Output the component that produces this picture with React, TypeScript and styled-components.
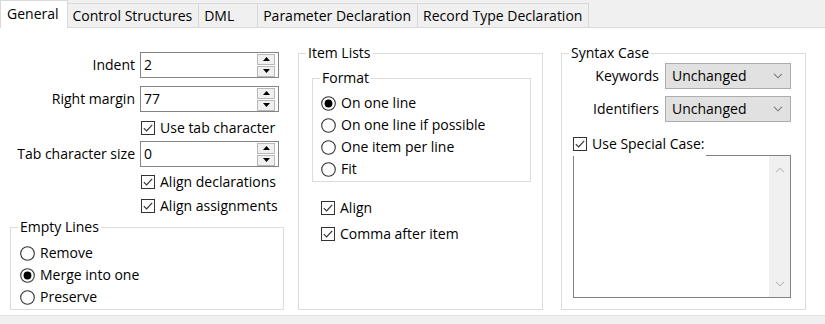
import React from "react";
import styled, { createGlobalStyle } from "styled-components";

const GlobalStyle = createGlobalStyle`
  html, body { margin: 0; padding: 0; background: #ffffff; }
  body {
    font-family: "Open Sans", "Noto Sans", "DejaVu Sans", sans-serif;
    font-size: 14px;
    color: #000000;
  }
  * { box-sizing: border-box; }
`;

const Window = styled.div`
  width: 825px;
  height: 324px;
  display: flex;
  flex-direction: column;
  background: #ffffff;
  overflow: hidden;
`;

const TabBar = styled.div`
  height: 28px;
  flex: none;
  display: flex;
  align-items: flex-end;
  background: #f0f0f0;
  border-bottom: 1px solid #d9d9d9;
`;

const Tab = styled.div<{ $active?: boolean }>`
  position: relative;
  z-index: ${(p) => (p.$active ? 1 : 0)};
  height: ${(p) => (p.$active ? "28px" : "24px")};
  margin-bottom: ${(p) => (p.$active ? "-1px" : "0")};
  margin-left: ${(p) => (p.$active ? "0" : "-1px")};
  min-width: 60px;
  padding: ${(p) => (p.$active ? "0 8px 2px 6px" : "0 6px 0 5px")};
  display: flex;
  align-items: center;
  background: ${(p) => (p.$active ? "#ffffff" : "#f0f0f0")};
  border: 1px solid #d9d9d9;
  border-bottom: none;
  white-space: nowrap;
  line-height: 18px;
`;

const Body = styled.div`
  flex: 1;
  display: flex;
  gap: 14px;
  padding: 0 0 5px 10px;
  min-height: 0;
`;

const LeftColumn = styled.div`
  width: 274px;
  display: flex;
  flex-direction: column;
  padding-top: 24px;
`;

const MiddleColumn = styled.div`
  width: 245px;
  display: flex;
  flex-direction: column;
  padding-top: 17px;
`;

const RightColumn = styled.div`
  width: 245px;
  margin-left: 4px;
  display: flex;
  flex-direction: column;
  padding-top: 17px;
`;

const Footer = styled.div`
  height: 9px;
  flex: none;
  background: #f0f0f0;
  border-top: 1px solid #e3e3e3;
`;

const GroupBox = styled.fieldset<{ $mt?: number }>`
  margin: ${(p) => p.$mt ?? 0}px 0 0 0;
  padding: 0;
  min-width: 0;
  border: 1px solid #dcdcdc;
`;

const FillGroupBox = styled(GroupBox)`
  flex: 1;
`;

const GroupTitle = styled.legend`
  margin-left: 7px;
  padding: 0 2px;
  line-height: 16px;
  font-size: 14px;
`;

const GroupContent = styled.div<{ $pad: string }>`
  padding: ${(p) => p.$pad};
  display: flex;
  flex-direction: column;
`;

const FieldRow = styled.div<{ $mt?: number }>`
  display: flex;
  align-items: center;
  gap: 5px;
  margin-top: ${(p) => p.$mt ?? 0}px;
`;

const FieldLabel = styled.div`
  width: 125px;
  text-align: right;
  white-space: nowrap;
  line-height: 18px;
`;

const SpinBox = styled.div`
  width: 139px;
  height: 26px;
  display: flex;
  align-items: center;
  border: 1px solid #848484;
  background: #ffffff;
`;

const SpinValue = styled.div`
  flex: 1;
  padding-left: 3px;
  line-height: 20px;
`;

const SpinButtons = styled.div`
  display: flex;
  flex-direction: column;
  gap: 1px;
  padding-right: 3px;
`;

const SpinButton = styled.div`
  width: 18px;
  height: 11px;
  border: 1px solid #b9b9b9;
  background: #f0f0f0;
  display: flex;
  align-items: center;
  justify-content: center;
`;

const CheckRow = styled.div<{ $indent?: number; $mt?: number }>`
  height: 24px;
  display: flex;
  align-items: center;
  gap: 5px;
  padding-left: ${(p) => p.$indent ?? 0}px;
  margin-top: ${(p) => p.$mt ?? 0}px;
  white-space: nowrap;
  line-height: 18px;
`;

const OverlayCheckRow = styled(CheckRow)`
  position: relative;
  z-index: 1;
  align-self: flex-start;
  background: #ffffff;
  padding-right: 2px;
`;

const RadioRow = styled.div`
  height: 22px;
  display: flex;
  align-items: center;
  gap: 5px;
  white-space: nowrap;
  line-height: 18px;
`;

const ComboRow = styled.div<{ $mt?: number }>`
  display: flex;
  align-items: center;
  gap: 6px;
  margin-top: ${(p) => p.$mt ?? 0}px;
`;

const ComboLabel = styled.div`
  width: 86px;
  text-align: right;
  white-space: nowrap;
  line-height: 18px;
`;

const ComboBox = styled.div`
  width: 126px;
  height: 26px;
  display: flex;
  align-items: center;
  justify-content: space-between;
  padding: 0 7px 0 6px;
  background: #e1e1e1;
  border: 1px solid #adadad;
  line-height: 18px;
`;

const TextArea = styled.div`
  width: 218px;
  height: 143px;
  margin-top: -1px;
  display: flex;
  justify-content: flex-end;
  border: 1px solid #828282;
  background: #ffffff;
`;

const ScrollBar = styled.div`
  width: 21px;
  background: #f0f0f0;
  display: flex;
  flex-direction: column;
  align-items: center;
  justify-content: space-between;
  padding: 11px 0 10px;
`;

const CheckIcon = () => (
  <svg width="14" height="14" viewBox="0 0 14 14" style={{ flex: "none" }}>
    <rect x="0.5" y="0.5" width="13" height="13" fill="#ffffff" stroke="#333333" />
    <path d="M2.8 7.1 L5.6 9.9 L11.2 3.8" fill="none" stroke="#333333" strokeWidth="1.2" />
  </svg>
);

const RadioIcon = ({ checked }: { checked?: boolean }) => (
  <svg width="15" height="15" viewBox="0 0 15 15" style={{ flex: "none" }}>
    <circle cx="7.5" cy="7.5" r="6.8" fill="#ffffff" stroke="#333333" strokeWidth="1.1" />
    {checked && <circle cx="7.5" cy="7.5" r="3.9" fill="#000000" />}
  </svg>
);

const Triangle = ({ up }: { up?: boolean }) => (
  <svg width="7" height="4" viewBox="0 0 7 4">
    <polygon points={up ? "0,4 7,4 3.5,0" : "0,0 7,0 3.5,4"} fill="#000000" />
  </svg>
);

const Chevron = ({ up, color }: { up?: boolean; color: string }) => (
  <svg width="10" height="6" viewBox="0 0 10 6">
    <path
      d={up ? "M1 5.2 L5 1.2 L9 5.2" : "M1 0.8 L5 4.8 L9 0.8"}
      fill="none"
      stroke={color}
      strokeWidth="1.1"
    />
  </svg>
);

const Spin = ({ label, value, mt }: { label: string; value: string; mt: number }) => (
  <FieldRow $mt={mt}>
    <FieldLabel>{label}</FieldLabel>
    <SpinBox>
      <SpinValue>{value}</SpinValue>
      <SpinButtons>
        <SpinButton>
          <Triangle up />
        </SpinButton>
        <SpinButton>
          <Triangle />
        </SpinButton>
      </SpinButtons>
    </SpinBox>
  </FieldRow>
);

const Combo = ({ label, value, mt }: { label: string; value: string; mt: number }) => (
  <ComboRow $mt={mt}>
    <ComboLabel>{label}</ComboLabel>
    <ComboBox>
      <span>{value}</span>
      <Chevron color="#7a7a7a" />
    </ComboBox>
  </ComboRow>
);

export default function App() {
  return (
    <Window>
      <GlobalStyle />
      <TabBar>
        <Tab $active>General</Tab>
        <Tab>Control Structures</Tab>
        <Tab>DML</Tab>
        <Tab>Parameter Declaration</Tab>
        <Tab>Record Type Declaration</Tab>
      </TabBar>
      <Body>
        <LeftColumn>
          <Spin label="Indent" value="2" mt={0} />
          <Spin label="Right margin" value="77" mt={8} />
          <CheckRow $indent={131} $mt={4}>
            <CheckIcon />
            Use tab character
          </CheckRow>
          <Spin label="Tab character size" value="0" mt={1} />
          <CheckRow $indent={131} $mt={3}>
            <CheckIcon />
            Align declarations
          </CheckRow>
          <CheckRow $indent={131}>
            <CheckIcon />
            Align assignments
          </CheckRow>
          <FillGroupBox $mt={1}>
            <GroupTitle>Empty Lines</GroupTitle>
            <GroupContent $pad="7px 0 0 9px">
              <RadioRow>
                <RadioIcon />
                Remove
              </RadioRow>
              <RadioRow>
                <RadioIcon checked />
                Merge into one
              </RadioRow>
              <RadioRow>
                <RadioIcon />
                Preserve
              </RadioRow>
            </GroupContent>
          </FillGroupBox>
        </LeftColumn>

        <MiddleColumn>
          <FillGroupBox>
            <GroupTitle>Item Lists</GroupTitle>
            <GroupContent $pad="9px 11px 0 13px">
              <GroupBox>
                <GroupTitle>Format</GroupTitle>
                <GroupContent $pad="6px 0 1px 8px">
                  <RadioRow>
                    <RadioIcon checked />
                    On one line
                  </RadioRow>
                  <RadioRow>
                    <RadioIcon />
                    On one line if possible
                  </RadioRow>
                  <RadioRow>
                    <RadioIcon />
                    One item per line
                  </RadioRow>
                  <RadioRow>
                    <RadioIcon />
                    Fit
                  </RadioRow>
                </GroupContent>
              </GroupBox>
              <CheckRow $indent={9} $mt={14}>
                <CheckIcon />
                Align
              </CheckRow>
              <CheckRow $indent={9} $mt={2}>
                <CheckIcon />
                Comma after item
              </CheckRow>
            </GroupContent>
          </FillGroupBox>
        </MiddleColumn>

        <RightColumn>
          <FillGroupBox>
            <GroupTitle>Syntax Case</GroupTitle>
            <GroupContent $pad="2px 0 0 11px">
              <Combo label="Keywords" value="Unchanged" mt={0} />
              <Combo label="Identifiers" value="Unchanged" mt={7} />
              <OverlayCheckRow $mt={10}>
                <CheckIcon />
                Use Special Case:
              </OverlayCheckRow>
              <TextArea>
                <ScrollBar>
                  <Chevron up color="#bdbdbd" />
                  <Chevron color="#bdbdbd" />
                </ScrollBar>
              </TextArea>
            </GroupContent>
          </FillGroupBox>
        </RightColumn>
      </Body>
      <Footer />
    </Window>
  );
}
